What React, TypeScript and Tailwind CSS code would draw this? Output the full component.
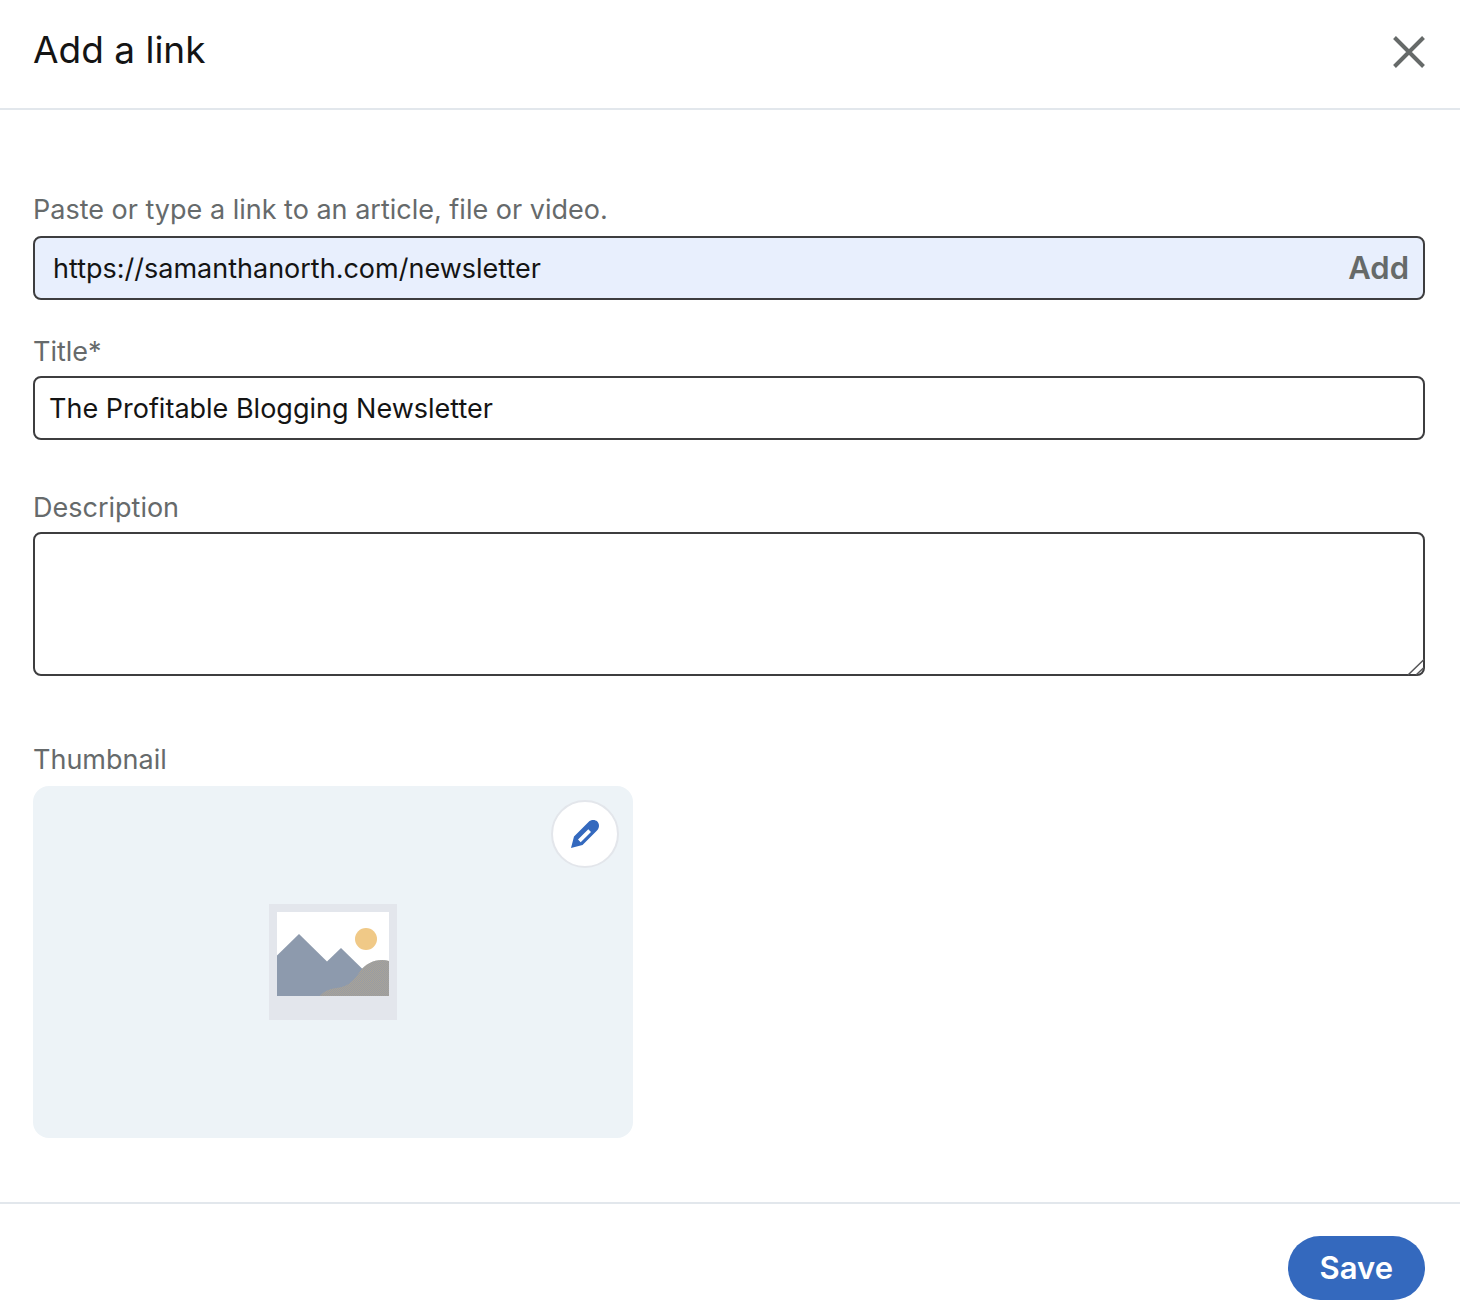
import { useState } from 'react';

const labelClass = "block text-[27px] leading-9 text-[#666a6b]";
const fieldClass = "block w-full rounded-lg border-2 border-[#3d3d3f] text-[27px] text-[#141414] focus:outline-none";

function CloseIcon() {
  return (
    <svg className="w-8 h-8" viewBox="0 0 32 32" fill="none" stroke="#666a69" strokeWidth="4" aria-hidden="true">
      <path d="M1.5 1.5 30.5 30.5M30.5 1.5 1.5 30.5" />
    </svg>
  );
}

function PencilIcon() {
  return (
    <svg className="w-7 h-7" viewBox="0 0 28 28" aria-hidden="true">
      <path
        fill="#3469be"
        fillRule="evenodd"
        d="M0 28 3 16.5 17.5 2C20-.4 24-.6 26.3 1.6c2.4 2.4 2.2 6.2-.3 8.900L11.500 25ZM7 19.500 9.700 22.200 20 12 17.300 9.200Z"
      />
    </svg>
  );
}

function PlaceholderImage() {
  return (
    <svg className="w-32 h-[116px]" viewBox="0 0 128 116" role="img" aria-label="No thumbnail">
      <defs>
        <pattern id="hill" width="2" height="2" patternUnits="userSpaceOnUse">
          <rect width="2" height="2" fill="#8d9aad" />
          <path fill="#b5a78f" d="M0 0h1v1H0ZM1 1h1v1H1Z" />
        </pattern>
      </defs>
      <rect width="128" height="116" fill="#e3e6ec" />
      <rect x="8" y="8" width="112" height="84" fill="#fff" />
      <path fill="#8d9aad" d="M8 51.5 30 30 58 57.5 72 44 93 64.5 120 75V92H8Z" />
      <path fill="#a09f9c" d="M51 92C56 86 62 84.500 71 83.500 81 81.500 86 75 91 67.500 97 59 108 54 120 57V92Z" />
      <path fill="url(#hill)" fillOpacity="0.5" d="M51 92C56 86 62 84.500 71 83.500 81 81.500 86 75 91 67.500 97 59 108 54 120 57V92Z" />
      <circle cx="97" cy="35" r="11" fill="#f0c987" />
    </svg>
  );
}

export default function App() {
  const [link, setLink] = useState('https://samanthanorth.com/newsletter');
  const [title, setTitle] = useState('The Profitable Blogging Newsletter');
  const [description, setDescription] = useState('');

  return (
    <div className="bg-white font-['Inter',sans-serif]">
      <header className="flex items-center justify-between border-b-2 border-[#e2e7ec] pl-[33px] pr-[35px] pt-[26px] pb-[30px]">
        <h1 className="pb-1 text-[37px] leading-12 text-[#141414]">Add a link</h1>
        <button type="button" aria-label="Close">
          <CloseIcon />
        </button>
      </header>

      <form onSubmit={(e) => e.preventDefault()}>
        <div className="pl-[33px] pr-[35px] pt-[82px] pb-16">
          <label htmlFor="link" className={labelClass}>Paste or type a link to an article, file or video.</label>
          <div className="mt-2 flex h-16 items-center rounded-lg border-2 border-[#3d3d3f] bg-[#e8effd]">
            <input
              id="link"
              type="text"
              value={link}
              onChange={(e) => setLink(e.target.value)}
              className="h-full min-w-0 flex-1 bg-transparent px-[18px] text-[27px] text-[#141414] focus:outline-none"
            />
            <button type="button" className="pr-[14px] text-[31px] font-semibold text-[#666a69]">Add</button>
          </div>

          <label htmlFor="title" className={`${labelClass} mt-[34px]`}>Title*</label>
          <input
            id="title"
            type="text"
            value={title}
            onChange={(e) => setTitle(e.target.value)}
            className={`${fieldClass} mt-1.5 h-16 px-[14px]`}
            required
          />

          <label htmlFor="description" className={`${labelClass} mt-[50px]`}>Description</label>
          <div className="relative mt-1.5">
            <textarea
              id="description"
              value={description}
              onChange={(e) => setDescription(e.target.value)}
              className={`${fieldClass} h-36 resize-none px-[14px] py-3`}
            />
            <svg className="pointer-events-none absolute right-0 bottom-0 w-[18px] h-[18px]" viewBox="0 0 18 18" fill="none" stroke="#555557" strokeWidth="1.5" aria-hidden="true">
              <path d="M1 17 17 1.5M9 17 17 9.5" />
            </svg>
          </div>

          <h2 className={`${labelClass} mt-[66px]`}>Thumbnail</h2>
          <div className="relative mt-2 flex h-[352px] w-full max-w-[600px] items-center justify-center rounded-2xl bg-[#edf3f7]">
            <PlaceholderImage />
            <button
              type="button"
              aria-label="Edit thumbnail"
              className="absolute top-3.5 right-3.5 flex h-[68px] w-[68px] items-center justify-center rounded-full border-2 border-[#e3e6eb] bg-white"
            >
              <PencilIcon />
            </button>
          </div>
        </div>

        <footer className="flex justify-end border-t-2 border-[#e2e7ec] pl-[33px] pr-[35px] pt-8 pb-4">
          <button type="submit" className="h-16 rounded-full bg-[#3469be] px-8 text-[31px] font-semibold text-white">Save</button>
        </footer>
      </form>
    </div>
  );
}
